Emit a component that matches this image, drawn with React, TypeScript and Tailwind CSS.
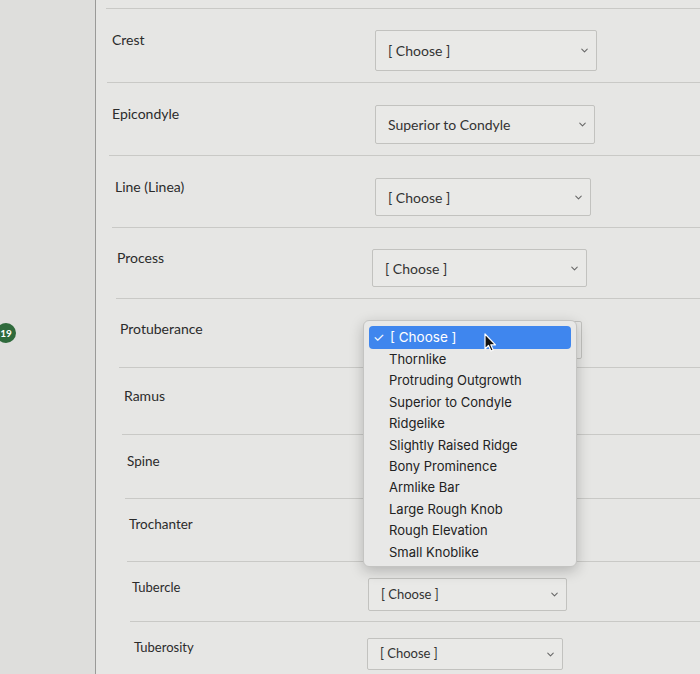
import { ChevronDown } from "lucide-react";

type Row = {
  label: string;
  value: string;
  row: string;
  col: string;
  box: string;
  text: string;
};

// rows 5-8 sit under the open list, so their value is hidden
const rows: Row[] = [
  {
    label: "Crest",
    value: "[ Choose ]",
    row: "ml-[10px] h-[74px]",
    col: "w-[269px] pl-[6px] pt-[22px] text-[14px]",
    box: "mt-[21px] w-[222px] h-[41px]",
    text: "text-[14px]",
  },
  {
    label: "Epicondyle",
    value: "Superior to Condyle",
    row: "ml-[11px] h-[73px]",
    col: "w-[268px] pl-[5px] pt-[22px] text-[14px]",
    box: "mt-[22px] w-[220px] h-[39px]",
    text: "text-[14px]",
  },
  {
    label: "Line (Linea)",
    value: "[ Choose ]",
    row: "ml-[13px] h-[72px]",
    col: "w-[266px] pl-[6px] pt-[22px] text-[14px]",
    box: "mt-[22px] w-[216px] h-[38px]",
    text: "text-[14px]",
  },
  {
    label: "Process",
    value: "[ Choose ]",
    row: "ml-[16px] h-[71px]",
    col: "w-[260px] pl-[5px] pt-[21px] text-[14px]",
    box: "mt-[21px] w-[215px] h-[38px]",
    text: "text-[14px]",
  },
  {
    label: "Protuberance",
    value: "",
    row: "ml-[20px] h-[69px]",
    col: "w-[251px] pl-[4px] pt-[21px] text-[14px]",
    box: "mt-[22px] w-[215px] h-[38px]",
    text: "text-[14px]",
  },
  {
    label: "Ramus",
    value: "",
    row: "ml-[23px] h-[67px]",
    col: "w-[250px] pl-[5px] pt-[19px] text-[14px]",
    box: "mt-[18px] w-[208px] h-[36px]",
    text: "text-[13.5px]",
  },
  {
    label: "Spine",
    value: "",
    row: "ml-[26px] h-[64px]",
    col: "w-[247px] pl-[5px] pt-[18px] text-[13.5px]",
    box: "mt-[17px] w-[204px] h-[37px]",
    text: "text-[13.5px]",
  },
  {
    label: "Trochanter",
    value: "",
    row: "ml-[29px] h-[63px]",
    col: "w-[243px] pl-[4px] pt-[17px] text-[13.5px]",
    box: "mt-[17px] w-[201px] h-[35px]",
    text: "text-[13px]",
  },
  {
    label: "Tubercle",
    value: "[ Choose ]",
    row: "ml-[31px] h-[60px]",
    col: "w-[241px] pl-[5px] pt-[17px] text-[13px]",
    box: "mt-[16px] w-[199px] h-[33px]",
    text: "text-[13px]",
  },
  {
    label: "Tuberosity",
    value: "[ Choose ]",
    row: "ml-[34px] h-[53px]",
    col: "w-[237px] pl-[4px] pt-[17px] text-[13px]",
    box: "mt-[16px] w-[196px] h-[32px]",
    text: "text-[13px]",
  },
];

const options = [
  "Thornlike",
  "Protruding Outgrowth",
  "Superior to Condyle",
  "Ridgelike",
  "Slightly Raised Ridge",
  "Bony Prominence",
  "Armlike Bar",
  "Large Rough Knob",
  "Rough Elevation",
  "Small Knoblike",
];

const App = () => {
  return (
    <div className="relative w-[700px] h-[674px] overflow-hidden bg-[#e6e6e4] flex font-['Lato','Open_Sans',sans-serif] text-[#2b2b2b]">
      {/* left gutter */}
      <div className="w-[96px] shrink-0 bg-[#dededc] border-r border-[#9a9a98]" />

      {/* question rows */}
      <div className="flex-1 pt-[8px] flex flex-col">
        {rows.map((r) => (
          <div key={r.label} className={`flex border-t border-[#c9c9c6] ${r.row}`}>
            <div className={`shrink-0 leading-[17px] ${r.col}`}>{r.label}</div>
            <div
              className={`shrink-0 flex items-center justify-between pl-[12px] pr-[6px] border border-[#c2c2bf] rounded-[2px] bg-[#e9e9e7] ${r.box}`}
            >
              <span className={`text-[#333] ${r.text}`}>{r.value}</span>
              <ChevronDown className="size-[11px] text-[#666]" strokeWidth={2.2} />
            </div>
          </div>
        ))}
      </div>

      {/* question number badge */}
      <div className="absolute left-[-4px] top-[323px] w-[20px] h-[20px] rounded-full bg-[#2f6a3c] flex items-center justify-center text-[10px] font-bold text-white">
        19
      </div>

      {/* open dropdown */}
      <div className="absolute left-[363px] top-[320px] w-[214px] h-[247px] rounded-[6px] bg-[#e8e8e7] border border-[#c4c4c2] shadow-[0_4px_14px_rgba(0,0,0,0.22)] pt-[5px] font-['Inter','Liberation_Sans',sans-serif] text-[13px] text-[#222]">
        <div className="mx-[5px] h-[23px] rounded-[4px] bg-[#3f86ee] text-white text-[13.5px] flex items-center">
          <span className="w-[21px] pl-[4px] text-[13px]">✓</span>
          <span>[ Choose ]</span>
        </div>
        {options.map((o) => (
          <div key={o} className="h-[21.4px] leading-[21.4px] pl-[25px]">
            {o}
          </div>
        ))}
      </div>

      {/* mouse pointer */}
      <svg className="absolute left-[484px] top-[333px]" width="14" height="20" viewBox="0 0 14 20">
        <path d="M1 1 L1 16 L4.5 12.5 L7 18 L9.2 17 L6.8 11.8 L11.5 11.8 Z" fill="#111" stroke="#fff" strokeWidth="1.2" strokeLinejoin="round" />
      </svg>
    </div>
  );
};

export default App;
